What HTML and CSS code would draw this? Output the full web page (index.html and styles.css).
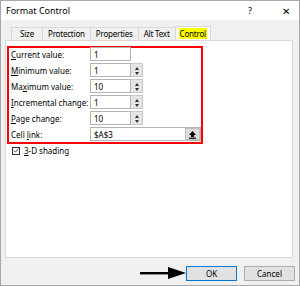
FILE: index.html
```html
<!DOCTYPE html>
<html lang="en">
<head>
    <meta charset="UTF-8">
    <title>Format Control</title>
    <link rel="stylesheet" href="styles.css">
</head>
<body>
    <div class="dialog">
        <div class="titlebar">
            <span class="title">Format Control</span>
            <span class="help">?</span>
            <span class="close">&#x2715;</span>
        </div>

        <ul class="tabs">
            <li class="tab">Size</li>
            <li class="tab">Protection</li>
            <li class="tab">Properties</li>
            <li class="tab">Alt Text</li>
            <li class="tab active"><span class="mark">Control</span></li>
        </ul>

        <div class="panel">
            <div class="group">
                <div class="row">
                    <label><u>C</u>urrent value:</label>
                    <div class="field"><input type="text" value="1"></div>
                </div>
                <div class="row">
                    <label><u>M</u>inimum value:</label>
                    <div class="field"><input type="text" value="1"><span class="spin"><i class="up"></i><i class="down"></i></span></div>
                </div>
                <div class="row">
                    <label>Ma<u>x</u>imum value:</label>
                    <div class="field"><input type="text" value="10"><span class="spin"><i class="up"></i><i class="down"></i></span></div>
                </div>
                <div class="row">
                    <label><u>I</u>ncremental change:</label>
                    <div class="field"><input type="text" value="1"><span class="spin"><i class="up"></i><i class="down"></i></span></div>
                </div>
                <div class="row">
                    <label><u>P</u>age change:</label>
                    <div class="field"><input type="text" value="10"><span class="spin"><i class="up"></i><i class="down"></i></span></div>
                </div>
                <div class="row">
                    <label>Cell <u>l</u>ink:</label>
                    <div class="field link">
                        <input type="text" value="$A$3">
                        <span class="pick">
                            <svg width="9" height="9" viewBox="0 0 9 9"><path d="M4.5 1 L8 5 H6 V7 H3 V5 H1 Z" fill="#000"/><rect x="1" y="7.6" width="7" height="1.2" fill="#000"/></svg>
                        </span>
                    </div>
                </div>
            </div>

            <div class="check-row">
                <span class="checkbox">
                    <svg width="7" height="7" viewBox="0 0 7 7"><path d="M1 3.6 L2.8 5.4 L6.2 1.4" stroke="#333" stroke-width="1" fill="none"/></svg>
                </span>
                <span><u>3</u>-D shading</span>
            </div>
        </div>

        <div class="footer">
            <button class="btn default">OK</button>
            <button class="btn">Cancel</button>
        </div>

        <!-- arrow pointing to OK -->
        <svg class="arrow" width="48" height="14" viewBox="0 0 48 14">
            <rect x="0" y="6" width="30" height="2.4" fill="#000"/>
            <path d="M28 1 L46 7 L28 13 Z" fill="#000"/>
        </svg>
    </div>
</body>
</html>
```

FILE: styles.css
```css
* {
    margin: 0;
    padding: 0;
    box-sizing: border-box;
}

body {
    font-family: "Noto Sans", "Open Sans", sans-serif;
    font-size: 8px;
    color: #000;
    background: #fff;
}

.dialog {
    position: relative;
    width: 300px;
    height: 286px;
    background-color: #f0f0f0;
    border: 1px solid #a8a8a8;
}

.titlebar {
    display: flex;
    align-items: center;
    height: 19px;
    background-color: #fff;
    padding-left: 5px;
    font-size: 9px;
}

.title {
    flex: 1;
}

.help {
    margin-right: 30px;
}

.close {
    margin-right: 9px;
    font-size: 10px;
}

.tabs {
    list-style-type: none;
    display: flex;
    align-items: flex-end;
    height: 20px;
    padding-left: 10px;
    letter-spacing: -0.2px;
}

.tab {
    min-width: 31px;
    text-align: center;
    height: 13px;
    line-height: 12px;
    padding: 0 5px;
    border: 1px solid #d9d9d9;
    border-bottom: none;
    border-right: none;
    background-color: #f0f0f0;
}

.tab.active {
    height: 14px;
    background-color: #fff;
    border-right: 1px solid #d9d9d9;
    padding: 0 3px;
}

.mark {
    display: inline-block;
    background-color: #ffff00;
    padding: 0 1px;
    height: 11px;
    line-height: 11px;
    margin-top: 1px;
}

.panel {
    height: 218px;
    margin: 0 6px 0 4px;
    background-color: #fff;
    border: 1px solid #d9d9d9;
    padding: 5px 0 0 1px;
}

.group {
    width: 196px;
    height: 98px;
    border: 2px solid #ff0000;
    padding: 0 0 0 2px;
    display: flex;
    flex-direction: column;
    gap: 2px;
}

.row {
    display: flex;
    align-items: center;
    height: 14px;
}

.row:first-child {
    margin-top: -1px;
}

.row label {
    width: 79px;
}

.field {
    display: flex;
    height: 14px;
}

.field input {
    width: 41px;
    height: 14px;
    border: 1px solid #b4b4b4;
    font-family: inherit;
    font-size: 8px;
    padding: 0 3px;
    color: #000;
    outline: none;
}

.spin {
    display: flex;
    flex-direction: column;
    width: 12px;
    height: 14px;
    background-color: #e6e6e6;
    border: 1px solid #c8c8c8;
    border-left: none;
    padding: 2px 0;
    gap: 2px;
    align-items: center;
}

.spin i {
    width: 0;
    height: 0;
    border-left: 2px solid transparent;
    border-right: 2px solid transparent;
}

.spin .up {
    border-bottom: 3px solid #333;
    margin-top: 1px;
}

.spin .down {
    border-top: 3px solid #333;
}

.field.link {
    position: relative;
    width: 111px;
}

.field.link input {
    width: 111px;
}

.pick {
    position: absolute;
    right: 1px;
    top: 1px;
    width: 15px;
    height: 12px;
    background-color: #dcdcdc;
    border: 1px solid #c0c0c0;
    display: flex;
    align-items: center;
    justify-content: center;
}

.check-row {
    display: flex;
    align-items: center;
    gap: 4px;
    margin: 1px 0 0 5px;
}

.checkbox {
    display: flex;
    align-items: center;
    justify-content: center;
    width: 8px;
    height: 8px;
    border: 1px solid #333;
}

.footer {
    display: flex;
    justify-content: flex-end;
    gap: 7px;
    padding: 8px 4px 0 0;
}

.btn {
    width: 51px;
    height: 15px;
    font-family: inherit;
    font-size: 8px;
    background-color: #e1e1e1;
    border: 1px solid #adadad;
}

.btn.default {
    border: 1px solid #0078d7;
}

.arrow {
    position: absolute;
    left: 139px;
    top: 265px;
}
```
